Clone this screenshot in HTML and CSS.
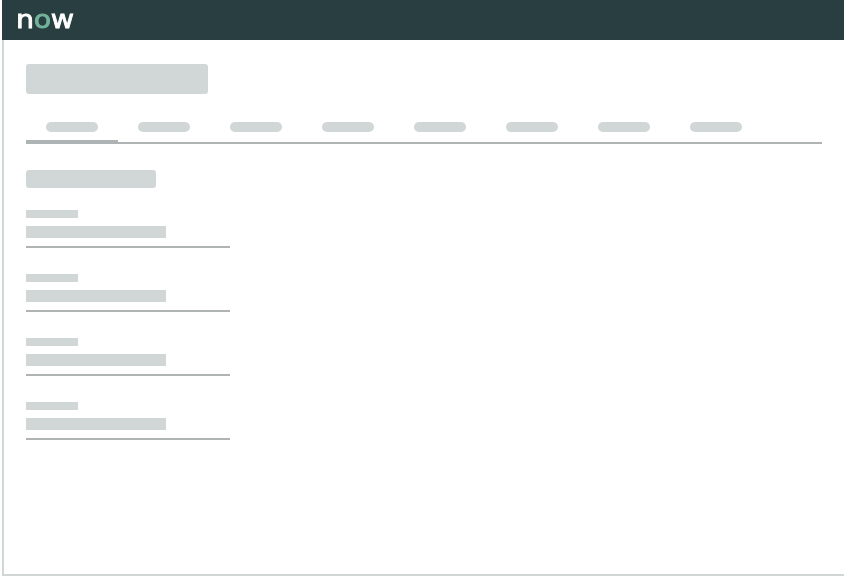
FILE: index.html
```html
<!DOCTYPE html>
<html lang="en">
<head>
    <meta charset="UTF-8">
    <title>now</title>
    <link rel="stylesheet" href="styles.css">
</head>
<body>
    <header class="topbar">
        <span class="logo">n<span class="logo-o">o</span>w</span>
    </header>
    <main class="page">
        <div class="skeleton title"></div>
        <ul class="tabs">
            <li class="tab active"><div class="skeleton pill"></div></li>
            <li class="tab"><div class="skeleton pill"></div></li>
            <li class="tab"><div class="skeleton pill"></div></li>
            <li class="tab"><div class="skeleton pill"></div></li>
            <li class="tab"><div class="skeleton pill"></div></li>
            <li class="tab"><div class="skeleton pill"></div></li>
            <li class="tab"><div class="skeleton pill"></div></li>
            <li class="tab"><div class="skeleton pill"></div></li>
        </ul>
        <div class="skeleton heading"></div>
        <div class="field">
            <div class="skeleton label"></div>
            <div class="skeleton value"></div>
        </div>
        <div class="field">
            <div class="skeleton label"></div>
            <div class="skeleton value"></div>
        </div>
        <div class="field">
            <div class="skeleton label"></div>
            <div class="skeleton value"></div>
        </div>
        <div class="field">
            <div class="skeleton label"></div>
            <div class="skeleton value"></div>
        </div>
    </main>
</body>
</html>
```

FILE: styles.css
```css
* {
    margin: 0;
    padding: 0;
    box-sizing: border-box;
}
ul {
    list-style: none;
}
body {
    width: 844px;
    height: 576px;
    padding-left: 2px;
    background-color: #fff;
    overflow: hidden;
}
.topbar {
    display: flex;
    align-items: center;
    height: 40px;
    padding-left: 14px;
    background-color: #293e40;
}
.logo {
    font-family: "DejaVu Sans", sans-serif;
    font-size: 25px;
    font-weight: 400;
    line-height: 40px;
    letter-spacing: -0.3px;
    color: #fff;
    -webkit-text-stroke: 0.8px currentColor;
    filter: blur(0.6px);
    transform: scaleX(1.14);
    transform-origin: left center;
}
.logo-o {
    color: #72b39b;
}
.page {
    height: 536px;
    padding: 24px 22px 0;
    border-left: 2px solid #d1d6d6;
    border-bottom: 2px solid #d1d6d6;
}
.skeleton {
    background-color: #d1d6d6;
}
.title {
    width: 182px;
    height: 30px;
    border-radius: 3px;
}
.tabs {
    display: flex;
    margin-top: 28px;
    border-bottom: 2px solid #aeb3b3;
}
.tab {
    width: 92px;
    height: 22px;
    margin-bottom: -2px;
    padding: 0 20px;
    border-bottom: 4px solid transparent;
}
.tab.active {
    border-bottom-color: #aeb3b3;
}
.pill {
    width: 52px;
    height: 10px;
    border-radius: 5px;
}
.heading {
    width: 130px;
    height: 18px;
    margin-top: 26px;
    margin-bottom: 22px;
    border-radius: 3px;
}
.field {
    width: 204px;
    height: 38px;
    margin-bottom: 26px;
    border-bottom: 2px solid #aeb3b3;
}
.label {
    width: 52px;
    height: 8px;
    margin-bottom: 8px;
}
.value {
    width: 140px;
    height: 12px;
}
```
